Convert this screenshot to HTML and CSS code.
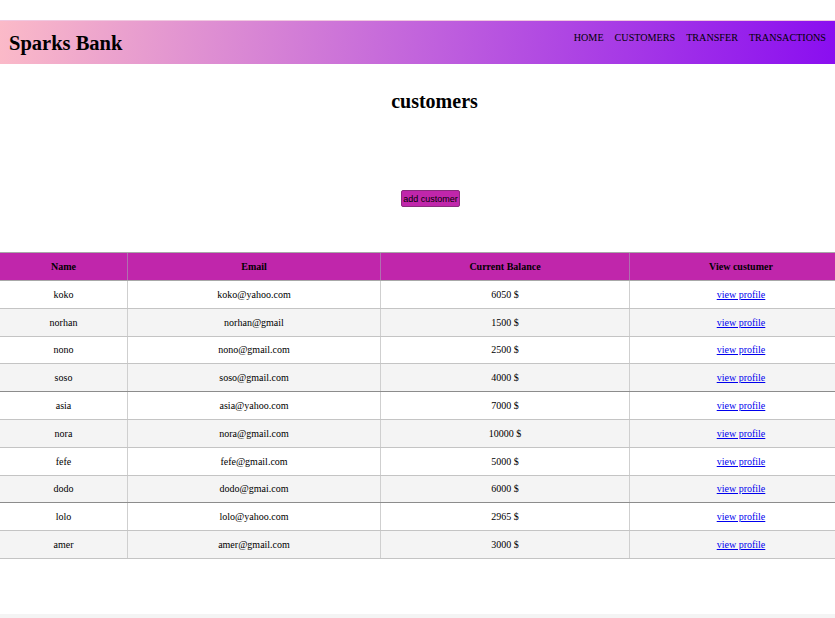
FILE: index.html
```html
<!DOCTYPE html>
<html>
<head>
<meta charset="utf-8">
<title>Sparks Bank</title>
<link rel="stylesheet" href="styles.css">
</head>
<body>
<header class="topbar">
  <div class="brand">Sparks Bank</div>
  <nav class="nav">
    <a href="#">HOME</a>
    <a href="#">CUSTOMERS</a>
    <a href="#">TRANSFER</a>
    <a href="#">TRANSACTIONS</a>
  </nav>
</header>
<main>
  <h2 class="title">customers</h2>
  <div class="actions"><button class="add-btn">add customer</button></div>
  <table class="customers">
    <thead>
      <tr><th class="c1">Name</th><th class="c2">Email</th><th class="c3">Current Balance</th><th class="c4">View custumer</th></tr>
    </thead>
    <tbody>
      <tr><td>koko</td><td>koko@yahoo.com</td><td>6050 $</td><td><a href="#">view profile</a></td></tr>
      <tr><td>norhan</td><td>norhan@gmail</td><td>1500 $</td><td><a href="#">view profile</a></td></tr>
      <tr><td>nono</td><td>nono@gmail.com</td><td>2500 $</td><td><a href="#">view profile</a></td></tr>
      <tr class="dark"><td>soso</td><td>soso@gmail.com</td><td>4000 $</td><td><a href="#">view profile</a></td></tr>
      <tr><td>asia</td><td>asia@yahoo.com</td><td>7000 $</td><td><a href="#">view profile</a></td></tr>
      <tr><td>nora</td><td>nora@gmail.com</td><td>10000 $</td><td><a href="#">view profile</a></td></tr>
      <tr><td>fefe</td><td>fefe@gmail.com</td><td>5000 $</td><td><a href="#">view profile</a></td></tr>
      <tr class="dark"><td>dodo</td><td>dodo@gmai.com</td><td>6000 $</td><td><a href="#">view profile</a></td></tr>
      <tr><td>lolo</td><td>lolo@yahoo.com</td><td>2965 $</td><td><a href="#">view profile</a></td></tr>
      <tr><td>amer</td><td>amer@gmail.com</td><td>3000 $</td><td><a href="#">view profile</a></td></tr>
    </tbody>
  </table>
</main>
<footer class="footer"></footer>
</body>
</html>
```
FILE: styles.css
```css
html, body {
  margin: 0;
  padding: 0;
  background: #fff;
  font-family: "Liberation Serif", "Times New Roman", serif;
  color: #000;
  overflow: hidden;
}
.topbar {
  margin-top: 20px;
  height: 44px;
  box-sizing: border-box;
  border-top: 1px solid #f0c8e0;
  background: linear-gradient(95deg, #fbbac8 0%, #c264dc 50%, #8a0ef0 100%);
  display: flex;
  justify-content: space-between;
  align-items: flex-start;
  padding: 0 9px 0 9px;
}
.brand {
  font-size: 20.5px;
  font-weight: bold;
  line-height: 24px;
  margin-top: 10px;
}
.nav {
  display: flex;
  gap: 11px;
  margin-top: 11px;
}
.nav a {
  font-size: 10.15px;
  line-height: 12px;
  color: #000;
  text-decoration: none;
}
.title {
  margin: 25px 0 0 0;
  padding-left: 34px;
  text-align: center;
  font-size: 20px;
  line-height: 24px;
  font-weight: bold;
}
.actions {
  display: flex;
  justify-content: center;
  padding-left: 26px;
  margin-top: 77px;
}
.add-btn {
  font-family: "Liberation Sans", Arial, sans-serif;
  font-size: 9px;
  height: 17px;
  padding: 0 1px;
  background: #c026ab;
  border: 1px solid #8a2c7e;
  border-radius: 2px;
  color: #000;
}
.customers {
  margin-top: 45px;
  width: 849px;
  border-collapse: collapse;
  table-layout: fixed;
  font-size: 10px;
}
.c1 { width: 127px; }
.c2 { width: 252px; }
.c3 { width: 248px; }
.c4 { width: 222px; }
.customers th {
  background: #c026ab;
  font-weight: bold;
  height: 27px;
  padding: 0;
  border-top: 1px solid #a8a8a8;
  border-bottom: 1px solid #a8a8a8;
  border-left: 1px solid #b070b0;
}
.customers td {
  height: 26.8px;
  padding: 0;
  text-align: center;
  border-bottom: 1px solid #c4c4c4;
  border-left: 1px solid #cfcfcf;
}
.customers th:first-child, .customers td:first-child { border-left: none; }
.customers tbody tr:nth-child(even) td { background: #f4f4f4; }
.customers tr.dark td { border-bottom-color: #8c8c8c; }
.customers a { color: #0000ee; }
.footer {
  position: absolute;
  left: 0;
  right: 0;
  top: 614px;
  height: 4px;
  background: #f4f4f4;
}
```
